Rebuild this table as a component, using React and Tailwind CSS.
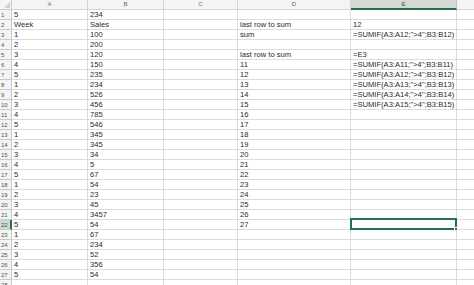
import React from "react";

const rows = [
  ["5", "234", "", ""],
  ["Week", "Sales", "last row to sum", "12"],
  ["1", "100", "sum", '=SUMIF(A3:A12;">4";B3:B12)'],
  ["2", "200", "", ""],
  ["3", "120", "last row to sum", "=E3"],
  ["4", "150", "11", '=SUMIF(A3:A11;">4";B3:B11)'],
  ["5", "235", "12", '=SUMIF(A3:A12;">4";B3:B12)'],
  ["1", "234", "13", '=SUMIF(A3:A13;">4";B3:B13)'],
  ["2", "526", "14", '=SUMIF(A3:A14;">4";B3:B14)'],
  ["3", "456", "15", '=SUMIF(A3:A15;">4";B3:B15)'],
  ["4", "785", "16", ""],
  ["5", "546", "17", ""],
  ["1", "345", "18", ""],
  ["2", "345", "19", ""],
  ["3", "34", "20", ""],
  ["4", "5", "21", ""],
  ["5", "67", "22", ""],
  ["1", "54", "23", ""],
  ["2", "23", "24", ""],
  ["3", "45", "25", ""],
  ["4", "3457", "26", ""],
  ["5", "54", "27", ""],
  ["1", "67", "", ""],
  ["2", "234", "", ""],
  ["3", "52", "", ""],
  ["4", "356", "", ""],
  ["5", "54", "", ""],
  ["", "", "", ""],
];

const cell =
  "h-full shrink-0 border-r border-[#dadcdd] pl-[2px] overflow-visible whitespace-nowrap";

export default function App() {
  return (
    <div
      className="w-[474px] h-[285px] overflow-hidden bg-white text-[#2a2a2a]"
      style={{ fontFamily: '"Liberation Sans", Arial, sans-serif' }}
    >
      {/* header */}
      <div className="flex h-[10px] text-[6px] leading-[9px] text-[#6b6b6b]">
        <div className="relative w-[12px] shrink-0 bg-[#f4f4f4] border-r border-b border-[#c9c9c9]">
          <svg className="absolute right-[1px] bottom-[1px]" width="6" height="6" viewBox="0 0 6 6">
            <polygon points="6,0 6,6 0,6" fill="#cfcfcf" />
          </svg>
        </div>
        <div className="w-[76px] shrink-0 bg-[#f4f4f4] border-r border-b border-[#d4d4d4] text-center">A</div>
        <div className="w-[76px] shrink-0 bg-[#f4f4f4] border-r border-b border-[#d4d4d4] text-center">B</div>
        <div className="w-[74px] shrink-0 bg-[#f4f4f4] border-r border-b border-[#d4d4d4] text-center">C</div>
        <div className="w-[113px] shrink-0 bg-[#f4f4f4] border-r border-b border-[#d4d4d4] text-center">D</div>
        <div className="w-[106px] shrink-0 bg-[#d6d8d6] border-r border-[#c0c0c0] border-b-2 border-b-[#217346] text-center text-[#2f5f3f] leading-[8px]">E</div>
        <div className="flex-1 bg-[#f4f4f4] border-b border-[#d4d4d4]"></div>
      </div>
      {rows.map((r, i) => {
        const n = i + 1;
        const sel = n === 22;
        return (
          <div key={n} className="flex h-[10px] text-[7.6px] leading-[10px]">
            <div
              className={
                sel
                  ? "w-[12px] shrink-0 bg-[#d3d6d3] border-r-2 border-r-[#217346] border-b border-[#c9c9c9] text-[6px] text-[#2f5f3f] pl-[1px] leading-[10px]"
                  : "w-[12px] shrink-0 bg-[#f4f4f4] border-r border-b border-[#c9c9c9] text-[6px] text-[#555] pl-[1px] leading-[10px]"
              }
            >
              {n}
            </div>
            <div className={"w-[76px] border-b " + cell}>{r[0]}</div>
            <div className={"w-[76px] border-b " + cell}>{r[1]}</div>
            <div className={"w-[74px] border-b " + cell}>{""}</div>
            <div className={"w-[113px] border-b " + cell}>{r[2]}</div>
            <div className={"relative w-[106px] border-b " + cell}>
              {r[3]}
              {sel && (
                <div className="absolute left-[-1px] top-[-2px] w-[107px] h-[12px] border-2 border-[#217346]">
                  <div className="absolute right-[-3px] bottom-[-3px] w-[4px] h-[4px] bg-[#217346] border border-white"></div>
                </div>
              )}
            </div>
            <div className="flex-1 h-full border-b border-[#dadcdd]"></div>
          </div>
        );
      })}
    </div>
  );
}
